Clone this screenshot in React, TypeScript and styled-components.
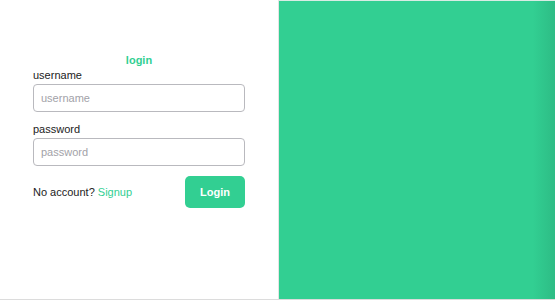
import styled, { createGlobalStyle } from 'styled-components';

const GlobalStyle = createGlobalStyle`
  html, body {
    margin: 0;
    padding: 0;
    background: #ffffff;
    font-family: 'Liberation Sans', Arial, sans-serif;
  }
`;

const green = '#32cf92';

const Page = styled.div`
  display: flex;
  width: 555px;
  height: 299px;
  border-bottom: 1px solid #dcdcdc;
`;

const FormSide = styled.div`
  width: 279px;
  display: flex;
  justify-content: center;
  padding-top: 54px;
  box-sizing: border-box;
  border-right: 1px solid #e4e4e4;
`;

const Form = styled.form`
  width: 212px;
  display: flex;
  flex-direction: column;
`;

const Title = styled.h1`
  margin: 0;
  text-align: center;
  color: ${green};
  font-size: 11px;
  font-weight: 700;
  line-height: 13px;
`;

const Label = styled.label`
  font-size: 11px;
  color: #222;
  line-height: 14px;
  margin-top: ${(p: { $gap: number }) => p.$gap}px;
`;

const Input = styled.input`
  margin-top: 2px;
  height: 28px;
  box-sizing: border-box;
  border: 1px solid #b9b9be;
  border-radius: 4px;
  padding: 0 7px;
  font-size: 11px;
  font-family: inherit;
  outline: none;
  &::placeholder {
    color: #a2a2a8;
  }
`;

const Footer = styled.div`
  margin-top: 10px;
  display: flex;
  align-items: center;
  justify-content: space-between;
`;

const Note = styled.span`
  font-size: 11px;
  color: #222;
`;

const Link = styled.a`
  color: ${green};
  text-decoration: none;
`;

const Button = styled.button`
  width: 60px;
  height: 32px;
  border: none;
  border-radius: 5px;
  background: ${green};
  color: #fff;
  font-family: inherit;
  font-size: 11px;
  font-weight: 700;
`;

const Banner = styled.div`
  flex: 1;
  border-top: 1px solid #d8ece4;
  background: linear-gradient(to right, ${green} 0%, ${green} 92%, #2dbc85 100%);
`;

export default function App() {
  return (
    <>
      <GlobalStyle />
      <Page>
        <FormSide>
          <Form onSubmit={(e) => e.preventDefault()}>
            <Title>login</Title>
            <Label $gap={1}>username</Label>
            <Input placeholder="username" />
            <Label $gap={10}>password</Label>
            <Input type="password" placeholder="password" />
            <Footer>
              <Note>
                No account? <Link href="#">Signup</Link>
              </Note>
              <Button type="submit">Login</Button>
            </Footer>
          </Form>
        </FormSide>
        <Banner />
      </Page>
    </>
  );
}
